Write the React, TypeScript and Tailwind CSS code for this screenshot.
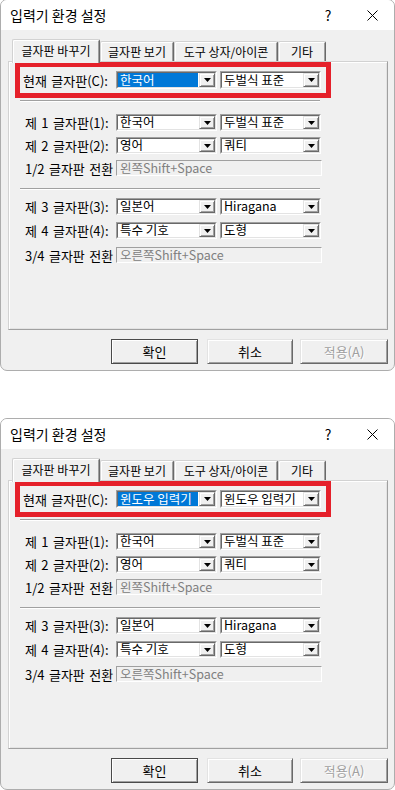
import React from "react";

const Arrow = () => (
  <svg width="7" height="4" viewBox="0 0 7 4">
    <path d="M0 0H7L3.5 4Z" fill="#000" />
  </svg>
);

function Combo({ text, selected = false, tall = false }: { text: string; selected?: boolean; tall?: boolean }) {
  return (
    <div
      className={`flex ${tall ? "h-[18px]" : "h-[17px]"} w-[101px] shrink-0 border border-t-[#a0a0a0] border-l-[#a0a0a0] border-r-white border-b-white`}
    >
      <div className="flex min-w-0 flex-1 border border-t-[#696969] border-l-[#696969] border-r-[#e3e3e3] border-b-[#e3e3e3] bg-white">
        <div className="flex min-w-0 flex-1 items-center pr-[1px]">
          <div
            className={`flex h-full flex-1 items-center whitespace-nowrap pl-[2px] text-[12.5px] leading-none ${
              selected ? "bg-[#0078d7] text-white" : "text-black"
            }`}
          >
            {text}
          </div>
        </div>
        <div className="flex w-[16px] shrink-0 items-center justify-center border border-t-[#e3e3e3] border-l-[#e3e3e3] border-r-[#696969] border-b-[#696969] bg-[#f0f0f0] shadow-[inset_1px_1px_0_#ffffff,inset_-1px_-1px_0_#a0a0a0]">
          <Arrow />
        </div>
      </div>
    </div>
  );
}

function Field({ text }: { text: string }) {
  return (
    <div className="flex h-[16px] w-[206px] shrink-0 items-center whitespace-nowrap border border-t-[#a0a0a0] border-l-[#a0a0a0] border-r-white border-b-white bg-[#f0f0f0] pl-[3px] text-[12.5px] leading-none text-[#808080]">
      {text}
    </div>
  );
}

function Tab({ children, w, sel = false }: { children: React.ReactNode; w: string; sel?: boolean }) {
  return (
    <div
      className={`relative flex shrink-0 items-center justify-center whitespace-nowrap rounded-t-[2px] border-l border-t border-r border-l-[#d2d2d2] border-t-[#d2d2d2] border-r-[#696969] bg-[#f0f0f0] text-[12px] leading-none text-black shadow-[inset_1px_1px_0_#ffffff,inset_-1px_0_0_#a0a0a0] ${w} ${
        sel ? "z-10 -mb-[2px] h-[24px] pb-[2px]" : "h-[20px]"
      }`}
    >
      {children}
    </div>
  );
}

function Sep() {
  return <div className="ml-[11px] h-[2px] w-[300px] shrink-0 border-t border-t-[#a0a0a0] border-b border-b-white" />;
}

function Row({ label, a, b }: { label: string; a: string; b: string }) {
  return (
    <div className="flex h-[17px] shrink-0 items-center pl-[16px]">
      <div className="w-[91px] shrink-0 whitespace-nowrap text-[13px] leading-none [word-spacing:1.5px]">{label}</div>
      <Combo text={a} />
      <div className="w-[3px]" />
      <Combo text={b} />
    </div>
  );
}

function FieldRow({ label, text }: { label: string; text: string }) {
  return (
    <div className="flex h-[16px] shrink-0 items-center pl-[16px]">
      <div className="w-[91px] shrink-0 whitespace-nowrap text-[13px] leading-none [word-spacing:1.5px]">{label}</div>
      <Field text={text} />
    </div>
  );
}

function Dialog({ current, current2 }: { current: string; current2: string }) {
  return (
    <div className="flex h-[372px] w-[395px] shrink-0 flex-col overflow-hidden rounded-[7px] border border-[#adadad] bg-[#f0f0f0] text-black">
      {/* title bar */}
      <div className="flex h-[30px] shrink-0 items-center bg-white">
        <span className="flex-1 whitespace-nowrap pl-[9px] text-[14px] leading-none">입력기 환경 설정</span>
        <span className="w-[20px] text-center text-[14px] leading-none">?</span>
        <span className="ml-[24px] mr-[12px] flex w-[20px] justify-center">
          <svg width="11" height="11" viewBox="0 0 11 11">
            <path d="M0.5 0.5L10.5 10.5M10.5 0.5L0.5 10.5" stroke="#000" strokeWidth="1" />
          </svg>
        </span>
      </div>

      {/* tabs */}
      <div className="flex h-[31px] shrink-0 items-end pl-[11px]">
        <Tab w="w-[88px]" sel>
          글자판 바꾸기
        </Tab>
        <Tab w="w-[74px]">글자판 보기</Tab>
        <Tab w="w-[104px]">도구 상자/아이콘</Tab>
        <Tab w="w-[48px]">기타</Tab>
      </div>

      {/* panel */}
      <div className="ml-[7px] flex h-[269px] w-[380px] shrink-0 flex-col border border-t-[#d2d2d2] border-l-[#d2d2d2] border-r-[#a0a0a0] border-b-[#a0a0a0] shadow-[inset_1px_1px_0_#ffffff,inset_-1px_-1px_0_#e3e3e3]">
        <div className="ml-[6px] flex h-[36px] w-[316px] shrink-0 items-center border-[5px] border-[#e5202a]">
          <div className="w-[96px] shrink-0 whitespace-nowrap pl-[3px] text-[13px] leading-none [word-spacing:1.5px]">현재 글자판(C):</div>
          <Combo text={current} selected tall />
          <div className="w-[3px]" />
          <Combo text={current2} tall />
        </div>
        <div className="mt-[2px]">
          <Sep />
        </div>
        <div className="mt-[12px]">
          <Row label="제 1 글자판(1):" a="한국어" b="두벌식 표준" />
        </div>
        <div className="mt-[6px]">
          <Row label="제 2 글자판(2):" a="영어" b="쿼티" />
        </div>
        <div className="mt-[6px]">
          <FieldRow label="1/2 글자판 전환" text="왼쪽Shift+Space" />
        </div>
        <div className="mt-[12px]">
          <Sep />
        </div>
        <div className="mt-[8px]">
          <Row label="제 3 글자판(3):" a="일본어" b="Hiragana" />
        </div>
        <div className="mt-[7px]">
          <Row label="제 4 글자판(4):" a="특수 기호" b="도형" />
        </div>
        <div className="mt-[8px]">
          <FieldRow label="3/4 글자판 전환" text="오른쪽Shift+Space" />
        </div>
      </div>

      {/* buttons */}
      <div className="mt-[9px] flex h-[25px] shrink-0 justify-end pr-[6px] text-[13px] leading-none">
        <div className="mr-[9px] flex w-[87px] items-center justify-center border border-[#4a4a4a] bg-[#f0f0f0] shadow-[inset_1px_1px_0_#ffffff,inset_-1px_-1px_0_#a0a0a0]">
          확인
        </div>
        <div className="mr-[7px] flex w-[86px] items-center justify-center border border-t-[#e3e3e3] border-l-[#e3e3e3] border-r-[#696969] border-b-[#696969] bg-[#f0f0f0] shadow-[inset_1px_1px_0_#ffffff,inset_-1px_-1px_0_#a0a0a0]">
          취소
        </div>
        <div className="flex w-[88px] items-center justify-center border border-t-[#e3e3e3] border-l-[#e3e3e3] border-r-[#696969] border-b-[#696969] bg-[#f0f0f0] text-[#a0a0a0] shadow-[inset_1px_1px_0_#ffffff,inset_-1px_-1px_0_#a0a0a0] [text-shadow:1px_1px_0_#ffffff]">
          적용(A)
        </div>
      </div>
    </div>
  );
}

export default function App() {
  return (
    <div className="h-[790px] w-[395px] overflow-hidden bg-white font-['Noto_Sans_CJK_KR','Noto_Sans',sans-serif]">
      <div className="-mt-[1px]">
        <Dialog current="한국어" current2="두벌식 표준" />
      </div>
      <div className="mt-[47px]">
        <Dialog current="윈도우 입력기" current2="윈도우 입력기" />
      </div>
    </div>
  );
}
